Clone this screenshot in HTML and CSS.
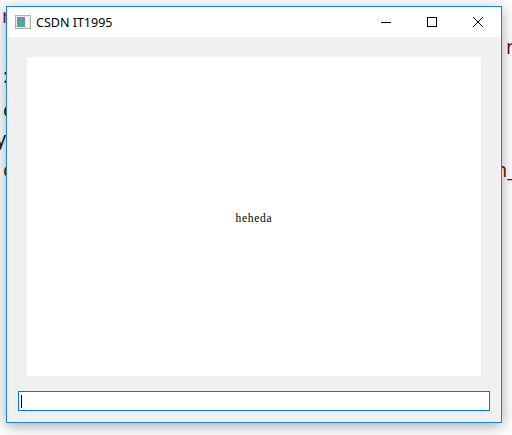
FILE: index.html
```html
<!DOCTYPE html>
<html lang="en">
<head>
<meta charset="UTF-8">
<title>CSDN IT1995</title>
<link rel="stylesheet" href="styles.css">
</head>
<body>
	<div class="backdrop">
		<span class="peek peek-a">r</span>
		<span class="peek peek-b">:</span>
		<span class="peek peek-c">:</span>
		<span class="peek peek-d">c</span>
		<span class="peek peek-e">y</span>
		<span class="peek peek-f">c</span>
		<span class="peek peek-g">n</span>
		<span class="peek peek-h">n_</span>
	</div>

	<div class="window">
		<div class="titlebar">
			<svg class="app-icon" width="16" height="14" viewBox="0 0 16 14">
				<rect x="0.5" y="0.5" width="15" height="13" fill="#ececec" stroke="#b0b0b0"/>
				<rect x="2" y="2" width="8" height="10" fill="#5fa596"/>
				<rect x="2" y="2" width="8" height="4" fill="#6d8fb0"/>
				<rect x="11" y="2" width="3" height="10" fill="#fafafa"/>
			</svg>
			<span class="title">CSDN IT1995</span>
			<div class="controls">
				<div class="control">
					<svg width="10" height="10" viewBox="0 0 10 10"><path d="M0 5.5H10" stroke="#000" fill="none"/></svg>
				</div>
				<div class="control">
					<svg width="10" height="10" viewBox="0 0 10 10"><rect x="0.5" y="0.5" width="9" height="9" stroke="#000" fill="none"/></svg>
				</div>
				<div class="control">
					<svg width="10" height="10" viewBox="0 0 10 10"><path d="M0 0L10 10M10 0L0 10" stroke="#000" stroke-width="1" fill="none"/></svg>
				</div>
			</div>
		</div>
		<div class="client">
			<div class="panel">heheda</div>
			<div class="line-edit"><span class="caret"></span></div>
		</div>
	</div>
</body>
</html>
```

FILE: styles.css
```css
html, body {
	margin: 0;
	height: 100%;
	overflow: hidden;
	background-color: #fff;
}

body {
	position: relative;
	font-family: "Noto Sans", "Open Sans", sans-serif;
}

.backdrop {
	position: absolute;
	left: 0;
	top: 0;
	width: 512px;
	height: 435px;
	overflow: hidden;
	font-family: "Open Sans", sans-serif;
	font-size: 20px;
	line-height: 24px;
}

.peek {
	position: absolute;
	color: #111;
}

.peek-a { left: 2px; top: 4px; color: #8b1030; }
.peek-b { left: -4px; top: 35px; color: #3a8fd8; }
.peek-c { left: 3px; top: 64px; }
.peek-d { left: 3px; top: 98px; }
.peek-e { left: -4px; top: 127px; }
.peek-f { left: 3px; top: 158px; color: #8b0000; }
.peek-g { left: 506px; top: 35px; color: #8b0000; }
.peek-h { left: 495px; top: 158px; color: #8b0000; }

.window {
	position: absolute;
	left: 6px;
	top: 6px;
	width: 494px;
	height: 415px;
	display: flex;
	flex-direction: column;
	background-color: #f0f0f0;
	border: 1px solid #1883d7;
	box-shadow: 0 3px 14px rgba(0, 0, 0, 0.35);
}

.titlebar {
	height: 30px;
	flex-shrink: 0;
	display: flex;
	align-items: center;
	padding-left: 8px;
	background-color: #fff;
}

.app-icon {
	margin-right: 5px;
}

.title {
	flex: 1;
	font-size: 12.5px;
	color: #000;
}

.controls {
	display: flex;
}

.control {
	width: 46px;
	height: 30px;
	display: flex;
	align-items: center;
	justify-content: center;
}

.client {
	flex: 1;
	display: flex;
	flex-direction: column;
	padding: 20px 11px 10px;
}

.panel {
	height: 317px;
	padding-top: 2px;
	margin: 0 9px 15px;
	display: flex;
	align-items: center;
	justify-content: center;
	background-color: #fff;
	font-family: "Liberation Serif", serif;
	font-size: 11.5px;
	letter-spacing: 0.7px;
	color: #000;
}

.line-edit {
	height: 18px;
	display: flex;
	align-items: center;
	padding-left: 2px;
	background-color: #fff;
	border: 1px solid #0078d7;
}

.caret {
	width: 1px;
	height: 13px;
	background-color: #000;
}
```
